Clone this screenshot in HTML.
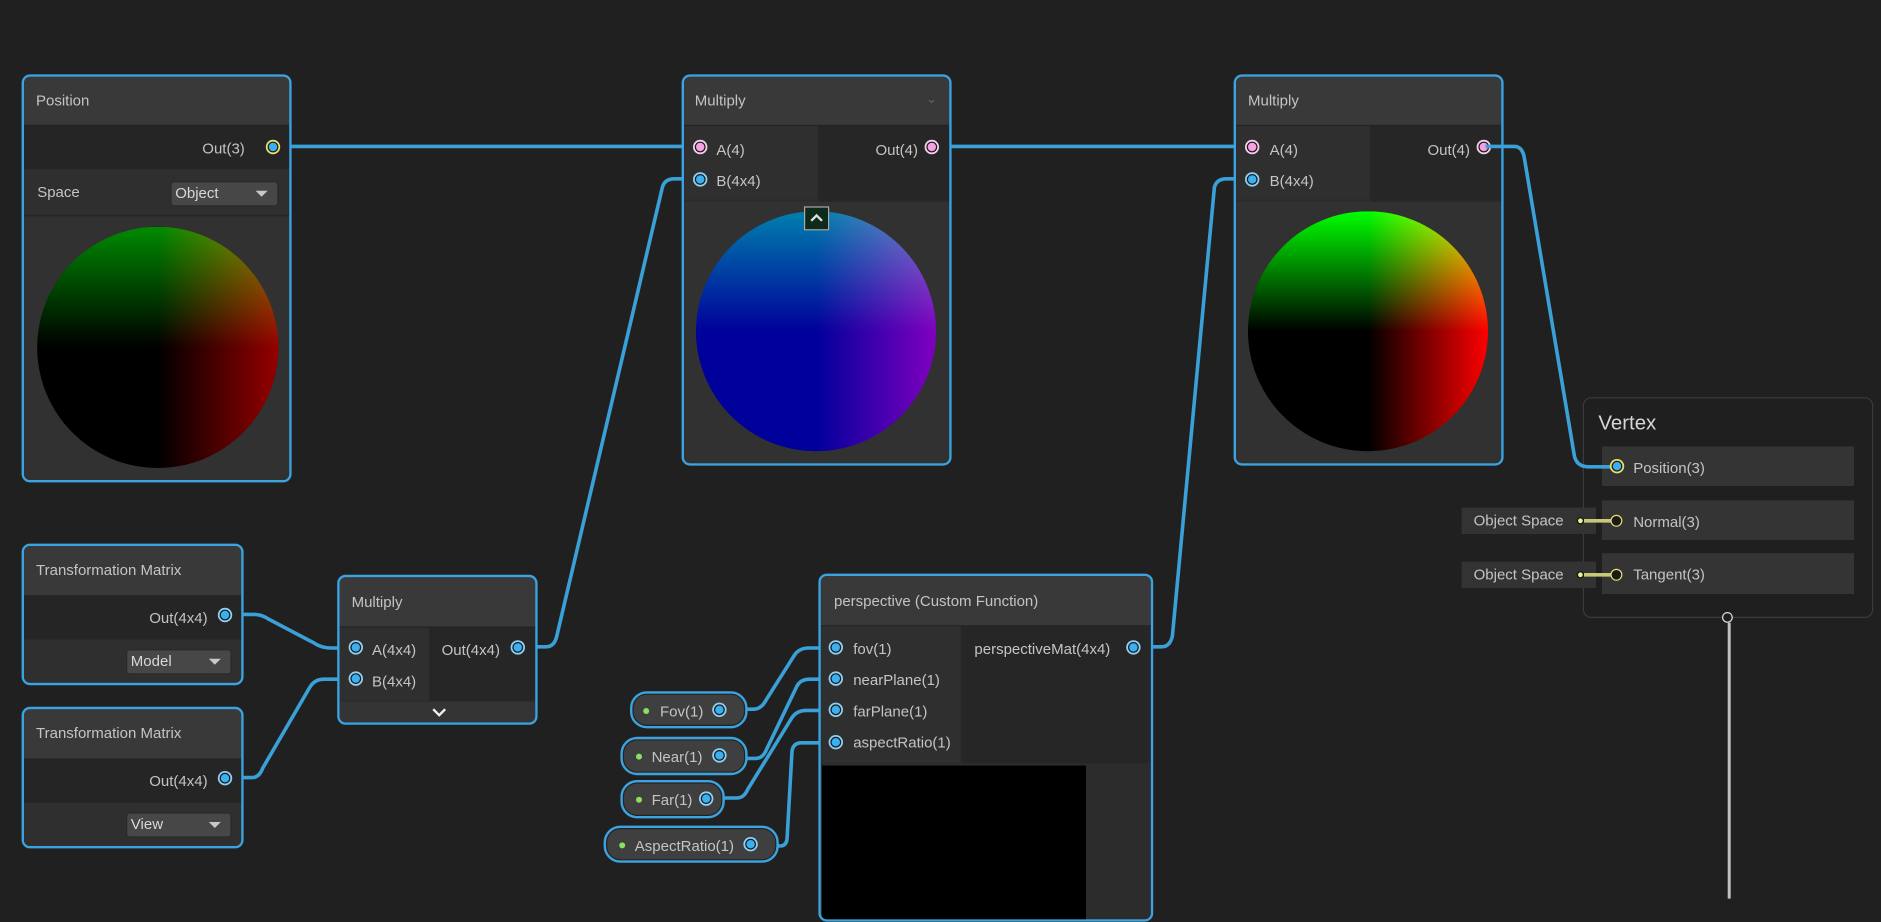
<!DOCTYPE html>
<html><head><meta charset="utf-8">
<style>
html,body{margin:0;padding:0;background:#202020;width:1881px;height:899px;overflow:hidden}
#w{position:absolute;left:0;top:0;width:1568px;height:749px;transform:scale(1.2);transform-origin:0 0;font-family:"Liberation Sans",sans-serif;color:#c4c4c4;font-size:12.5px}
.a{position:absolute;box-sizing:border-box}
.node{position:absolute;box-sizing:border-box;border:2px solid #3aa3e0;border-radius:7px;background:#2c2c2c;overflow:hidden}
.hd{position:absolute;left:0;right:0;top:0;background:#393939;border-bottom:1px solid #232323}
.t{position:absolute;white-space:nowrap}
.port{position:absolute;width:7px;height:7px;border-radius:50%;background:#3ab0f0;border:1.5px solid #1a1a1a;box-shadow:0 0 0 1.5px #8fd0f5}
.pp{background:#f5a0e0;box-shadow:0 0 0 1.5px #f8d0ee}
.dd{position:absolute;background:#474747;border-radius:3px;border:1px solid #2a2a2a;color:#d8d8d8}
.dd:after{content:"";position:absolute;right:8px;top:7px;border-left:5px solid transparent;border-right:5px solid transparent;border-top:5px solid #c8c8c8}
.sph{position:absolute;border-radius:50%;overflow:hidden}
.sph div{position:absolute;inset:0;mix-blend-mode:screen}
.prop{position:absolute;box-sizing:border-box;border:2px solid #3aa3e0;border-radius:14px;background:#3f3f3f;box-shadow:inset 0 0 0 1px #222}
.gd{position:absolute;width:5px;height:5px;border-radius:50%;background:#8ce060}
</style></head><body><div id="w">

<svg class="a" style="left:0;top:0" width="1568" height="749">
<g fill="none" stroke="#3aa0d8" stroke-width="3">
<path d="M229 122 H570"/>
<path d="M778 122 H1045"/>
<path d="M433 539 H455 Q462 539 464 530 L552 156 Q554 149 562 149 H585"/>
<path d="M946 539 H968 Q975 539 977 530 L1012 156 Q1014 149 1022 149 H1045"/>
<path d="M188 512 H212 Q218 512 224 516 L262 536 Q268 540 276 540 H298"/>
<path d="M188 648 H210 Q216 648 219 640 L258 573 Q262 566 270 566 H298"/>
<path d="M622 591 H628 Q634 591 638 584 L662 546 Q666 540 674 540 H698"/>
<path d="M622 632 H630 Q636 632 639 624 L664 572 Q667 566 675 566 H698"/>
<path d="M603 665 H614 Q620 665 623 658 L660 598 Q664 592 672 592 H698"/>
<path d="M648 705 H650 Q656 705 656 697 L660 626 Q661 619 668 619 H698"/>
</g>
</svg>

<!-- Position -->
<div class="node" style="left:18px;top:62px;width:225px;height:340px">
 <div class="hd" style="height:40px"><span class="t" style="left:10px;top:13px">Position</span></div>
 <div class="a" style="left:0;right:0;top:41px;height:36px;background:#252525"><span class="t" style="right:37px;top:12px">Out(3)</span></div>
 <div class="a" style="left:0;right:0;top:77px;height:39px;background:#2f2f2f;border-bottom:1px solid #262626"><span class="t" style="left:11px;top:12px">Space</span><div class="dd" style="left:122px;top:10px;width:88px;height:19px"><span class="t" style="left:3px;top:2px">Object</span></div></div>
 <div class="a" style="left:0;right:0;top:117px;bottom:0;background:#313131"></div>
 <div class="sph" style="left:11px;top:125px;width:201px;height:201px;background:#000">
  <div style="background:linear-gradient(to right,#000 50%,#960000 100%)"></div>
  <div style="background:linear-gradient(to top,#000 50%,#008a00 100%)"></div>
 </div>
</div>
<div class="port" style="left:223px;top:118px;border-color:#1a1a1a;box-shadow:0 0 0 1.5px #e8e070"></div>

<!-- Multiply 1 -->
<div class="node" style="left:568px;top:62px;width:225px;height:326px">
 <div class="hd" style="height:40px"><span class="t" style="left:9px;top:13px">Multiply</span><span class="t" style="right:10px;top:12px;color:#666;font-size:11px">⌄</span></div>
 <div class="a" style="left:0;width:111px;top:41px;height:61px;background:#2f2f2f"><span class="t" style="left:27px;top:13px">A(4)</span><span class="t" style="left:27px;top:39px">B(4x4)</span></div>
 <div class="a" style="left:112px;right:0;top:41px;height:63px;background:#262626"><span class="t" style="right:26px;top:13px">Out(4)</span></div>
 <div class="a" style="left:0;right:0;top:104px;bottom:0;background:#313131"></div>
 <div class="sph" style="left:10px;top:112px;width:200px;height:200px;background:#00009a">
  <div style="background:linear-gradient(to right,rgba(0,0,0,0) 50%,#800060 100%)"></div>
  <div style="background:linear-gradient(to top,rgba(0,0,0,0) 50%,#008030 100%)"></div>
 </div>
 <div class="a" style="left:100px;top:108px;width:21px;height:20px;border:1px solid #aaa;background:#0d2a1a"><svg width="19" height="18" style="position:absolute;left:0;top:0"><path d="M5 11 L9.5 6.5 L14 11" stroke="#ddd" stroke-width="2" fill="none"/></svg></div>
</div>
<div class="port pp" style="left:579px;top:118px"></div>
<div class="port" style="left:579px;top:145px"></div>
<div class="port pp" style="left:772px;top:118px"></div>

<!-- Multiply 2 -->
<div class="node" style="left:1028px;top:62px;width:225px;height:326px">
 <div class="hd" style="height:40px"><span class="t" style="left:10px;top:13px">Multiply</span></div>
 <div class="a" style="left:0;width:111px;top:41px;height:61px;background:#2f2f2f"><span class="t" style="left:28px;top:13px">A(4)</span><span class="t" style="left:28px;top:39px">B(4x4)</span></div>
 <div class="a" style="left:112px;right:0;top:41px;height:63px;background:#262626"><span class="t" style="right:26px;top:13px">Out(4)</span></div>
 <div class="a" style="left:0;right:0;top:104px;bottom:0;background:#313131"></div>
 <div class="sph" style="left:10px;top:112px;width:200px;height:200px;background:#000">
  <div style="background:linear-gradient(to right,#000 50%,#ff0000 100%)"></div>
  <div style="background:linear-gradient(to top,#000 50%,#00ff00 100%)"></div>
 </div>
</div>
<div class="port pp" style="left:1039px;top:118px"></div>
<div class="port" style="left:1039px;top:145px"></div>
<div class="port pp" style="left:1232px;top:118px"></div>

<!-- Vertex -->
<div class="a" style="left:1319px;top:331px;width:242px;height:184px;border:1px solid #3b3b3b;border-radius:7px;background:#1f1f1f"></div>
<span class="t" style="left:1332px;top:343px;font-size:17px;color:#d6d6d6">Vertex</span>
<div class="a" style="left:1335px;top:372px;width:210px;height:33px;background:#343434"><span class="t" style="left:26px;top:11px">Position(3)</span></div>
<div class="a" style="left:1335px;top:417px;width:210px;height:33px;background:#343434"><span class="t" style="left:26px;top:11px">Normal(3)</span></div>
<div class="a" style="left:1335px;top:461px;width:210px;height:34px;background:#343434"><span class="t" style="left:26px;top:11px">Tangent(3)</span></div>
<div class="a" style="left:1218px;top:423px;width:112px;height:22px;background:#333"><span class="t" style="left:10px;top:4px">Object Space</span></div>
<div class="a" style="left:1218px;top:468px;width:112px;height:22px;background:#333"><span class="t" style="left:10px;top:4px">Object Space</span></div>

<svg class="a" style="left:0;top:0" width="1568" height="749">
<path d="M1238 122 H1262 Q1268 122 1270 130 L1312 380 Q1314 389 1324 389 H1346" fill="none" stroke="#3aa0d8" stroke-width="3"/>
<path d="M1320 434 H1346 M1320 479 H1346" stroke="#c8c87a" stroke-width="3"/>
<path d="M1441 519 V749" stroke="#c0c0c0" stroke-width="2.5"/>
</svg>
<div class="port" style="left:1343px;top:384px;box-shadow:0 0 0 1.5px #e8e070"></div>
<div class="a" style="left:1342px;top:429px;width:10px;height:10px;border-radius:50%;border:1.5px solid #e8e070;background:#1a1a1a"></div>
<div class="a" style="left:1342px;top:474px;width:10px;height:10px;border-radius:50%;border:1.5px solid #e8e070;background:#1a1a1a"></div>
<div class="a" style="left:1314px;top:431px;width:6px;height:6px;border-radius:50%;background:#f0f08a;border:1px solid #111"></div>
<div class="a" style="left:1314px;top:476px;width:6px;height:6px;border-radius:50%;background:#f0f08a;border:1px solid #111"></div>
<div class="a" style="left:1435px;top:510px;width:9px;height:9px;border-radius:50%;border:1.5px solid #ddd;background:#1f1f1f"></div>

<!-- TM1 -->
<div class="node" style="left:18px;top:453px;width:185px;height:118px">
 <div class="hd" style="height:41px"><span class="t" style="left:10px;top:13px">Transformation Matrix</span></div>
 <div class="a" style="left:0;right:0;top:42px;height:36px;background:#252525"><span class="t" style="right:28px;top:11px">Out(4x4)</span></div>
 <div class="a" style="left:0;right:0;top:78px;bottom:0;background:#2f2f2f"><div class="dd" style="left:85px;top:8px;width:86px;height:19px"><span class="t" style="left:3px;top:2px">Model</span></div></div>
</div>
<div class="port" style="left:183px;top:508px"></div>

<!-- TM2 -->
<div class="node" style="left:18px;top:589px;width:185px;height:118px">
 <div class="hd" style="height:41px"><span class="t" style="left:10px;top:13px">Transformation Matrix</span></div>
 <div class="a" style="left:0;right:0;top:42px;height:36px;background:#252525"><span class="t" style="right:28px;top:11px">Out(4x4)</span></div>
 <div class="a" style="left:0;right:0;top:78px;bottom:0;background:#2f2f2f"><div class="dd" style="left:85px;top:8px;width:86px;height:19px"><span class="t" style="left:3px;top:2px">View</span></div></div>
</div>
<div class="port" style="left:183px;top:644px"></div>

<!-- Multiply small -->
<div class="node" style="left:281px;top:479px;width:167px;height:125px">
 <div class="hd" style="height:41px"><span class="t" style="left:10px;top:14px">Multiply</span></div>
 <div class="a" style="left:0;width:74px;top:42px;height:61px;background:#2f2f2f"><span class="t" style="left:27px;top:12px">A(4x4)</span><span class="t" style="left:27px;top:38px">B(4x4)</span></div>
 <div class="a" style="left:75px;right:0;top:42px;height:61px;background:#262626"><span class="t" style="left:10px;top:12px">Out(4x4)</span></div>
 <div class="a" style="left:0;right:0;top:104px;bottom:0;background:#343434"><svg width="14" height="10" style="position:absolute;left:76px;top:4px"><path d="M2 2 L7 7 L12 2" stroke="#eee" stroke-width="2" fill="none"/></svg></div>
</div>
<div class="port" style="left:292px;top:535px"></div>
<div class="port" style="left:292px;top:561px"></div>
<div class="port" style="left:427px;top:535px"></div>

<!-- perspective -->
<div class="node" style="left:682px;top:478px;width:279px;height:290px">
 <div class="hd" style="height:41px"><span class="t" style="left:11px;top:14px">perspective (Custom Function)</span></div>
 <div class="a" style="left:0;width:116px;top:42px;height:114px;background:#2f2f2f">
  <span class="t" style="left:27px;top:12px">fov(1)</span><span class="t" style="left:27px;top:38px">nearPlane(1)</span><span class="t" style="left:27px;top:64px">farPlane(1)</span><span class="t" style="left:27px;top:90px">aspectRatio(1)</span></div>
 <div class="a" style="left:117px;right:0;top:42px;height:114px;background:#262626"><span class="t" style="left:11px;top:12px">perspectiveMat(4x4)</span></div>
 <div class="a" style="left:0;right:0;top:157px;bottom:0;background:#2c2c2c"></div>
 <div class="a" style="left:1px;top:158px;width:220px;height:130px;background:#000"></div>
</div>
<div class="port" style="left:692px;top:535px"></div>
<div class="port" style="left:692px;top:561px"></div>
<div class="port" style="left:692px;top:587px"></div>
<div class="port" style="left:692px;top:614px"></div>
<div class="port" style="left:940px;top:535px"></div>

<!-- properties -->
<div class="prop" style="left:525px;top:576px;width:98px;height:31px"><div class="gd" style="left:9px;top:12px"></div><span class="t" style="left:23px;top:8px">Fov(1)</span></div>
<div class="port" style="left:595px;top:587px"></div>
<div class="prop" style="left:517px;top:614px;width:106px;height:32px"><div class="gd" style="left:11px;top:12px"></div><span class="t" style="left:24px;top:8px">Near(1)</span></div>
<div class="port" style="left:595px;top:625px"></div>
<div class="prop" style="left:517px;top:650px;width:87px;height:32px"><div class="gd" style="left:11px;top:12px"></div><span class="t" style="left:24px;top:8px">Far(1)</span></div>
<div class="port" style="left:584px;top:661px"></div>
<div class="prop" style="left:503px;top:688px;width:146px;height:31px"><div class="gd" style="left:11px;top:12px"></div><span class="t" style="left:24px;top:8px">AspectRatio(1)</span></div>
<div class="port" style="left:621px;top:699px"></div>

</div></body></html>
